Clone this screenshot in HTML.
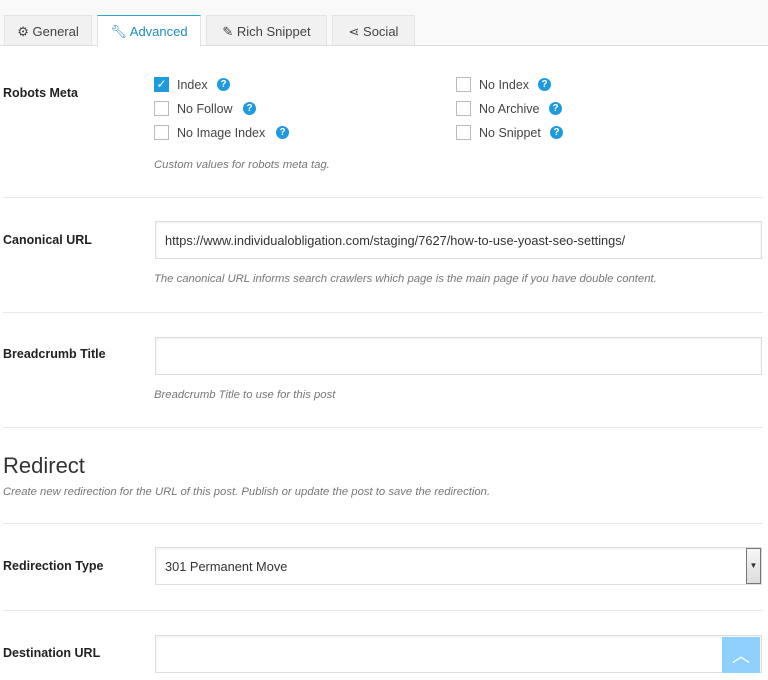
<!DOCTYPE html>
<html><head><meta charset="utf-8"><style>
body{margin:0;width:768px;height:680px;overflow:hidden;background:#fff;font-family:"Liberation Sans",sans-serif;color:#333;position:relative}
.a{position:absolute}
.top{left:0;top:0;width:768px;height:45px;background:#f9f9f9;border-bottom:1px solid #ddd}
.tab{top:15px;height:29px;background:#f1f1f1;border:1px solid #e3e3e3;border-bottom:none;font-size:13px;line-height:32px;text-align:center;color:#444}
.tab.on{background:#fff;border-top:1px solid #2ea2cc;color:#1e8cbe;height:31px}
.lbl{left:3px;font-size:12.5px;font-weight:bold;color:#222}
.cb{width:13px;height:13px;border:1px solid #bbb;background:#fff}
.cbt{font-size:12.5px;color:#444}
.q{width:13px;height:13px;border-radius:50%;background:#1e9be0;color:#fff;font-size:10px;font-weight:bold;text-align:center;line-height:13px}
.hint{left:154px;font-size:11.3px;font-style:italic;color:#777}
.hr{left:3px;width:760px;height:1px;background:#e8e8e8}
.inp{left:155px;width:605px;height:36px;border:1px solid #ddd;background:#fff;box-shadow:inset 0 1px 2px rgba(0,0,0,.07);font-size:12.8px;line-height:38px;color:#333;text-indent:9px}
</style></head><body>
<div class="a top"></div>
<div class="a tab" style="left:4px;width:86px">⚙ General</div>
<div class="a tab on" style="left:97px;width:102px">🔧︎ Advanced</div>
<div class="a tab" style="left:206px;width:119px">✎ Rich Snippet</div>
<div class="a tab" style="left:332px;width:81px">⋖ Social</div>

<div class="a lbl" style="top:86px">Robots Meta</div>
<div class="a cb" style="left:154px;top:77px;background:#1e9be0;border-color:#1e9be0;color:#fff;font-size:12px;line-height:13px;text-align:center">✓</div>
<div class="a cbt" style="left:177px;top:78px">Index</div><div class="a q" style="left:217px;top:78px">?</div>
<div class="a cb" style="left:154px;top:101px"></div>
<div class="a cbt" style="left:177px;top:102px">No Follow</div><div class="a q" style="left:243px;top:102px">?</div>
<div class="a cb" style="left:154px;top:125px"></div>
<div class="a cbt" style="left:177px;top:126px">No Image Index</div><div class="a q" style="left:276px;top:126px">?</div>
<div class="a cb" style="left:456px;top:77px"></div>
<div class="a cbt" style="left:479px;top:78px">No Index</div><div class="a q" style="left:538px;top:78px">?</div>
<div class="a cb" style="left:456px;top:101px"></div>
<div class="a cbt" style="left:479px;top:102px">No Archive</div><div class="a q" style="left:549px;top:102px">?</div>
<div class="a cb" style="left:456px;top:125px"></div>
<div class="a cbt" style="left:479px;top:126px">No Snippet</div><div class="a q" style="left:550px;top:126px">?</div>
<div class="a hint" style="top:159px">Custom values for robots meta tag.</div>
<div class="a hr" style="top:197px"></div>

<div class="a lbl" style="top:233px">Canonical URL</div>
<div class="a inp" style="top:221px">https://www.individualobligation.com/staging/7627/how-to-use-yoast-seo-settings/</div>
<div class="a hint" style="top:273px">The canonical URL informs search crawlers which page is the main page if you have double content.</div>
<div class="a hr" style="top:312px"></div>

<div class="a lbl" style="top:347px">Breadcrumb Title</div>
<div class="a inp" style="top:337px"></div>
<div class="a hint" style="top:389px">Breadcrumb Title to use for this post</div>
<div class="a hr" style="top:427px"></div>

<div class="a" style="left:3px;top:453px;font-size:22px;color:#333">Redirect</div>
<div class="a hint" style="left:3px;top:486px">Create new redirection for the URL of this post. Publish or update the post to save the redirection.</div>
<div class="a hr" style="top:523px"></div>

<div class="a lbl" style="top:559px">Redirection Type</div>
<div class="a inp" style="top:547px">301 Permanent Move</div>
<div class="a" style="left:746px;top:548px;width:13px;height:34px;border:1px solid #777;background:linear-gradient(#f6f6f6,#ddd);font-size:8px;text-align:center;line-height:34px">▼</div>
<div class="a hr" style="top:610px"></div>

<div class="a lbl" style="top:646px">Destination URL</div>
<div class="a inp" style="top:635px"></div>
<div class="a" style="left:722px;top:637px;width:38px;height:36px;background:#8fd0ff;color:#fff;text-align:center;font-size:18px;line-height:38px">︿</div>
</body></html>
